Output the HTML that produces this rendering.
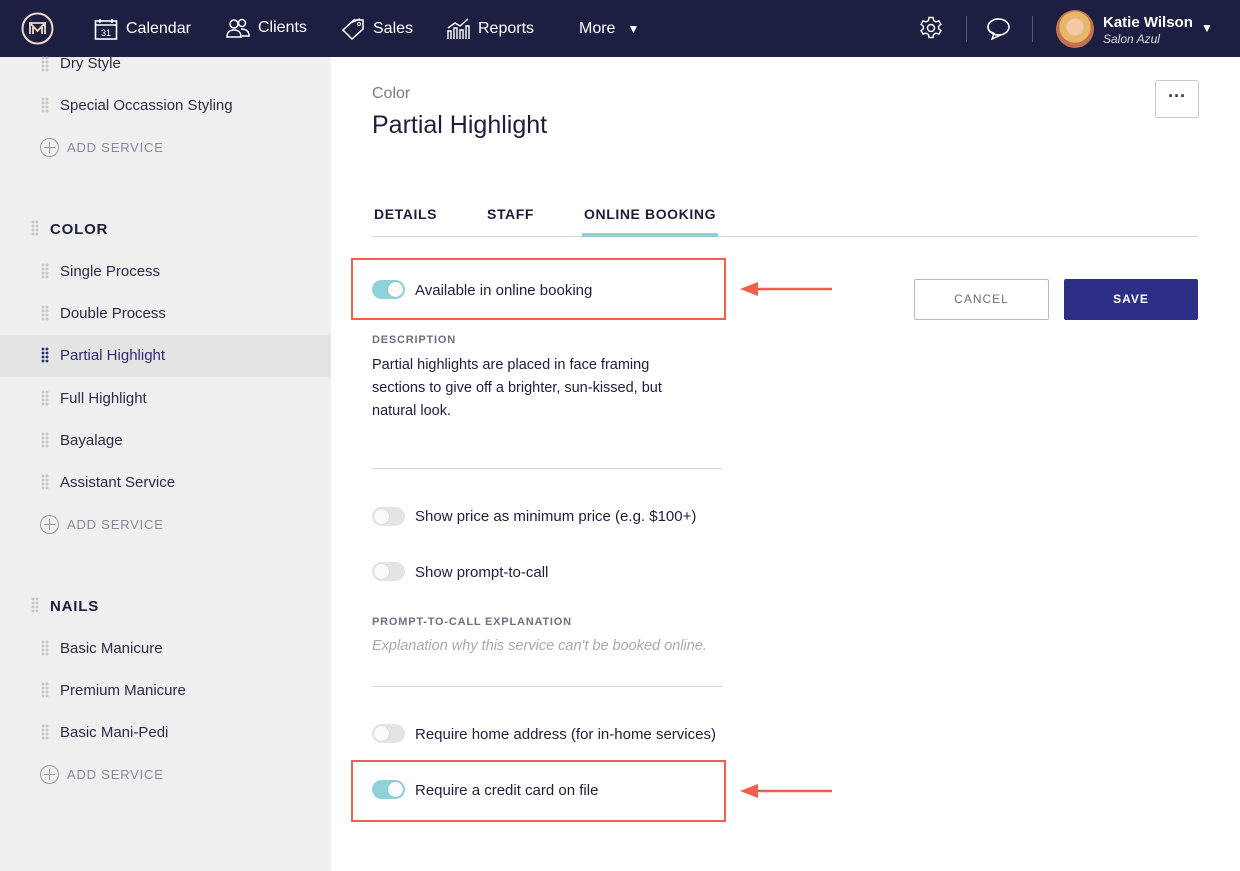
<!DOCTYPE html>
<html><head><style>
*{box-sizing:border-box;margin:0;padding:0}
body{width:1240px;height:871px;overflow:hidden;font-family:"Liberation Sans",sans-serif;background:#fff;color:#1d1f3a;position:relative}
.nav{position:absolute;left:0;top:0;width:1240px;height:57px;background:#1c1f41;color:#fff}
.nav .it{position:absolute;top:18px;font-size:16px;display:flex;align-items:center;gap:8px}
.side{position:absolute;left:0;top:57px;width:331px;height:814px;background:#efefef}
.abs{position:absolute}
.si{position:absolute;left:60px;font-size:15px;color:#2a2c45}
.dots{position:absolute;width:8px;height:16px;background-image:radial-gradient(circle,#c4c4c4 1.3px,transparent 1.5px);background-size:4px 4px}
.add{position:absolute;left:40px;font-size:13px;color:#8a8a98;letter-spacing:.8px;display:flex;align-items:center;gap:8px}
.add i{display:inline-block;width:19px;height:19px;border:1.5px solid #9a9aa6;border-radius:50%;position:relative}
.add i:before{content:"";position:absolute;left:3px;right:3px;top:7.5px;height:1.5px;background:#9a9aa6}
.add i:after{content:"";position:absolute;top:3px;bottom:3px;left:7.5px;width:1.5px;background:#9a9aa6}
.hd{position:absolute;left:50px;font-size:15px;font-weight:bold;letter-spacing:.8px;color:#1d1f3a}
.tog{position:absolute;width:33px;height:19px;border-radius:10px;background:#e4e4e4}
.tog:after{content:"";position:absolute;top:2px;left:2px;width:15px;height:15px;border-radius:50%;background:#fafafa;box-shadow:0 0 1px rgba(0,0,0,.2)}
.tog.on{background:#8fd1d8}.tog.on:after{left:16px}
.lbl{position:absolute;left:415px;font-size:15px;color:#1d1f3a}
.sm{position:absolute;left:372px;font-size:11px;letter-spacing:.8px;color:#6e6f80;font-weight:bold}
.hl{position:absolute;left:351px;width:375px;height:62px;border:2.5px solid #f0604e}
.arr{position:absolute;left:740px;width:92px;height:20px}
.line{position:absolute;left:372px;width:351px;height:1px;background:#d8d8dc}
</style></head><body>
<div class="nav">
<svg class="abs" style="left:21px;top:12px" width="33" height="33" viewBox="0 0 33 33"><circle cx="16.5" cy="16.5" r="15" fill="none" stroke="#f3d7c6" stroke-width="2"/><path d="M9 22V11h15v11M9 11l7.5 8 7.5-8M12 22v-7M21 22v-7" fill="none" stroke="#f3d7c6" stroke-width="1.8"/></svg>
<div class="it" style="left:94px"><svg width="24" height="22" viewBox="0 0 24 22"><rect x="1.5" y="3" width="21" height="18" fill="none" stroke="#fff" stroke-width="1.6"/><path d="M1.5 7h21M6 1v4M18 1v4" stroke="#fff" stroke-width="1.6"/><text x="7" y="18" font-size="9" fill="#fff" font-family="Liberation Sans">31</text></svg>Calendar</div>
<div class="it" style="left:226px"><svg width="24" height="20" viewBox="0 0 24 20"><circle cx="8" cy="6" r="4" fill="none" stroke="#fff" stroke-width="1.5"/><circle cx="16" cy="5" r="3.5" fill="none" stroke="#fff" stroke-width="1.5"/><path d="M1 19c0-5 3-7 7-7s7 2 7 7zM15 11c5 0 8 2 8 7h-7" fill="none" stroke="#fff" stroke-width="1.5"/></svg>Clients</div>
<div class="it" style="left:341px"><svg width="24" height="22" viewBox="0 0 24 22"><path d="M13 2h9v9L11 21 2 12z M9 5l10-4" fill="none" stroke="#fff" stroke-width="1.5"/><circle cx="18" cy="6" r="1.5" fill="none" stroke="#fff"/></svg>Sales</div>
<div class="it" style="left:446px"><svg width="24" height="22" viewBox="0 0 24 22"><path d="M2 21v-8h3v8M8 21v-11h3v11M14 21v-9h3v9M20 21v-13h3v13M2 10l7-5 5 3 8-7" fill="none" stroke="#fff" stroke-width="1.4"/></svg>Reports</div>
<div class="it" style="left:579px;top:20px">More <span style="font-size:12px;margin-left:4px">▼</span></div>
<svg class="abs" style="left:919px;top:16px" width="24" height="24" viewBox="0 0 24 24"><circle cx="12" cy="12" r="3.5" fill="none" stroke="#fff" stroke-width="1.5"/><path d="M10 1.5h4l.6 3 2.4 1.4 2.9-1 2 3.4-2.3 2v2.4l2.3 2-2 3.4-2.9-1-2.4 1.4-.6 3h-4l-.6-3-2.4-1.4-2.9 1-2-3.4 2.3-2v-2.4l-2.3-2 2-3.4 2.9 1 2.4-1.4z" fill="none" stroke="#fff" stroke-width="1.4"/></svg>
<div class="abs" style="left:966px;top:16px;width:1px;height:26px;background:#555a78"></div>
<svg class="abs" style="left:986px;top:17px" width="25" height="23" viewBox="0 0 25 23"><path d="M12.5 2C6.5 2 2 5.5 2 10s4.5 8 10.5 8c1 0 2-.1 3-.3L6 22l2-5.5C4 15 2 13 2 10" fill="none" stroke="#fff" stroke-width="1.5"/><ellipse cx="12.5" cy="10" rx="10.5" ry="8" fill="none" stroke="#fff" stroke-width="1.5"/></svg>
<div class="abs" style="left:1032px;top:16px;width:1px;height:26px;background:#555a78"></div>
<div class="abs" style="left:1056px;top:10px;width:38px;height:38px;border-radius:50%;background:radial-gradient(circle at 50% 45%,#f4c7a5 0 30%,#e6b66a 31% 55%,#c4704f 56%)"></div>
<div class="abs" style="left:1103px;top:14px;font-size:15px;font-weight:bold">Katie Wilson</div>
<div class="abs" style="left:1103px;top:32px;font-size:12px;font-style:italic;color:#ddd">Salon Azul</div>
<div class="abs" style="left:1201px;top:21px;font-size:12px">▼</div>
</div>

<div class="side">
<div class="abs" style="left:0;top:278px;width:331px;height:42px;background:#e4e4e4"></div>
</div>
<div class="dots" style="left:41px;top:56px"></div><div class="si" style="top:55px">Dry Style</div>
<div class="dots" style="left:41px;top:97px"></div><div class="si" style="top:97px">Special Occassion Styling</div>
<div class="add" style="top:138px"><i></i>ADD SERVICE</div>
<div class="dots" style="left:31px;top:220px"></div><div class="hd" style="top:221px">COLOR</div>
<div class="dots" style="left:41px;top:263px"></div><div class="si" style="top:263px">Single Process</div>
<div class="dots" style="left:41px;top:305px"></div><div class="si" style="top:305px">Double Process</div>
<div class="dots" style="left:41px;top:347px;background-image:radial-gradient(circle,#2a2d6e 1.3px,transparent 1.5px)"></div><div class="si" style="top:347px;color:#2a2d6e">Partial Highlight</div>
<div class="dots" style="left:41px;top:390px"></div><div class="si" style="top:390px">Full Highlight</div>
<div class="dots" style="left:41px;top:432px"></div><div class="si" style="top:432px">Bayalage</div>
<div class="dots" style="left:41px;top:474px"></div><div class="si" style="top:474px">Assistant Service</div>
<div class="add" style="top:515px"><i></i>ADD SERVICE</div>
<div class="dots" style="left:31px;top:597px"></div><div class="hd" style="top:598px">NAILS</div>
<div class="dots" style="left:41px;top:640px"></div><div class="si" style="top:640px">Basic Manicure</div>
<div class="dots" style="left:41px;top:682px"></div><div class="si" style="top:682px">Premium Manicure</div>
<div class="dots" style="left:41px;top:724px"></div><div class="si" style="top:724px">Basic Mani-Pedi</div>
<div class="add" style="top:765px"><i></i>ADD SERVICE</div>

<div class="abs" style="left:372px;top:85px;font-size:16px;color:#7a7b8a">Color</div>
<div class="abs" style="left:372px;top:111px;font-size:25px;color:#1d1f3a">Partial Highlight</div>
<div class="abs" style="left:1155px;top:80px;width:44px;height:38px;border:1px solid #c8c8cc;border-radius:3px;text-align:center;line-height:30px;font-size:18px;font-weight:bold;color:#333">···</div>
<div class="abs" style="left:374px;top:206px;font-size:14px;font-weight:bold;letter-spacing:.6px">DETAILS</div>
<div class="abs" style="left:487px;top:206px;font-size:14px;font-weight:bold;letter-spacing:.6px">STAFF</div>
<div class="abs" style="left:584px;top:206px;font-size:14px;font-weight:bold;letter-spacing:.6px">ONLINE BOOKING</div>
<div class="abs" style="left:372px;top:236px;width:826px;height:1px;background:#d8d8dc"></div>
<div class="abs" style="left:582px;top:233px;width:136px;height:4px;background:#8fd1d8"></div>

<div class="hl" style="top:258px"></div>
<div class="tog on" style="left:372px;top:280px"></div><div class="lbl" style="top:282px">Available in online booking</div>
<svg class="arr" style="top:279px" viewBox="0 0 92 20"><path d="M92 10H14" stroke="#f0604e" stroke-width="2.5"/><path d="M0 10L18 3v14z" fill="#f0604e"/></svg>
<div class="abs" style="left:914px;top:279px;width:135px;height:41px;border:1px solid #b8b8c0;border-radius:2px;text-align:center;line-height:39px;font-size:12px;letter-spacing:1px;color:#6e6f80">CANCEL</div>
<div class="abs" style="left:1064px;top:279px;width:134px;height:41px;background:#2d2f86;border-radius:2px;text-align:center;line-height:41px;font-size:12px;font-weight:bold;letter-spacing:1px;color:#fff">SAVE</div>
<div class="sm" style="top:334px">DESCRIPTION</div>
<div class="abs" style="left:372px;top:354px;width:330px;font-size:14.5px;line-height:23px;color:#1d1f3a">Partial highlights are placed in face framing sections to give off a brighter, sun-kissed, but natural look.</div>
<div class="line" style="top:468px"></div>
<div class="tog" style="left:372px;top:507px"></div><div class="lbl" style="top:508px">Show price as minimum price (e.g. $100+)</div>
<div class="tog" style="left:372px;top:562px"></div><div class="lbl" style="top:564px">Show prompt-to-call</div>
<div class="sm" style="top:616px">PROMPT-TO-CALL EXPLANATION</div>
<div class="abs" style="left:372px;top:638px;font-size:14.5px;font-style:italic;color:#a8a9b4">Explanation why this service can't be booked online.</div>
<div class="line" style="top:686px"></div>
<div class="tog" style="left:372px;top:724px"></div><div class="lbl" style="top:726px">Require home address (for in-home services)</div>
<div class="hl" style="top:760px"></div>
<div class="tog on" style="left:372px;top:780px"></div><div class="lbl" style="top:782px">Require a credit card on file</div>
<svg class="arr" style="top:781px" viewBox="0 0 92 20"><path d="M92 10H14" stroke="#f0604e" stroke-width="2.5"/><path d="M0 10L18 3v14z" fill="#f0604e"/></svg>
</body></html>
